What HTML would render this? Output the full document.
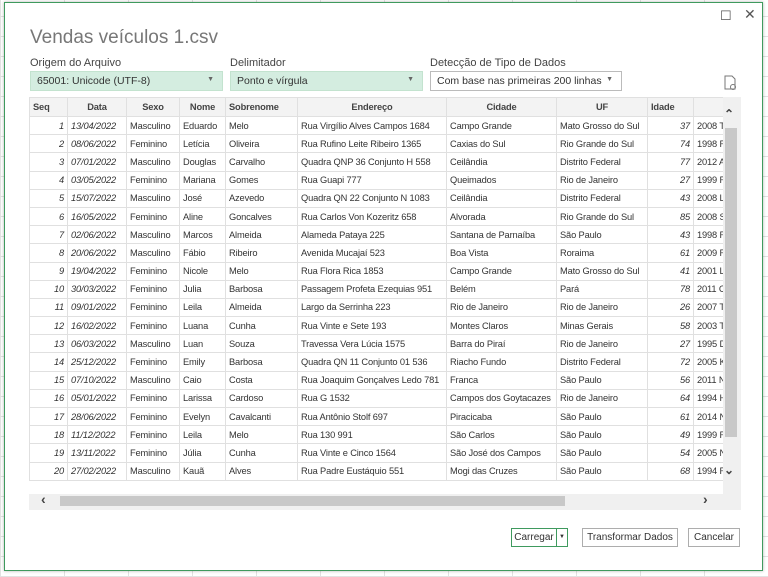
<!DOCTYPE html>
<html><head><meta charset="utf-8"><style>
*{box-sizing:border-box;margin:0;padding:0}
body{width:768px;height:577px;position:relative;overflow:hidden;background:#fff;font-family:"Liberation Sans",sans-serif;color:#333}
.bg{position:absolute;inset:0;background:repeating-linear-gradient(90deg,#e2e2e2 0 1px,transparent 1px 64px),repeating-linear-gradient(0deg,#e2e2e2 0 1px,transparent 1px 20px);background-color:#fff}
.dlg{position:absolute;left:4px;top:2px;width:759px;height:569px;background:#fff;border:1px solid #3f9a5e;box-shadow:0 0 3px rgba(0,0,0,.3)}
.abs{position:absolute}
.title{left:30px;top:27px;font-size:19px;color:#777;font-weight:normal}
.lbl{font-size:11px;color:#444}
.dd{height:20px;font-size:10.5px;padding:3px 6px;color:#333}
.green{background:#d4ede0;border:1px solid #c3e3cf}
.arr{position:absolute;right:8px;top:4px;font-size:7px;color:#666}
table{border-collapse:collapse;table-layout:fixed;font-size:9.3px;letter-spacing:-0.15px}
td,th{border:1px solid #e0e0e0;height:18.2px;padding:0 3px;white-space:nowrap;overflow:hidden}
th{background:#f3f3f3;font-weight:bold;color:#444;height:19px}
td.n{text-align:right;font-style:italic}
td.d{font-style:italic}
.btn{position:absolute;top:528px;height:19px;border:1px solid #adadad;font-size:10px;text-align:center;line-height:17px;background:#fff}
</style></head><body>
<div class="bg"></div>
<div class="dlg"></div>
<div class="abs" style="left:720px;top:8px;font-size:13px;color:#555">☐</div>
<div class="abs" style="left:744px;top:6px;font-size:14px;color:#555">✕</div>
<div class="abs title">Vendas veículos 1.csv</div>
<div class="abs lbl" style="left:30px;top:57px">Origem do Arquivo</div>
<div class="abs lbl" style="left:230px;top:57px">Delimitador</div>
<div class="abs lbl" style="left:430px;top:57px">Detecção de Tipo de Dados</div>
<div class="abs dd green" style="left:30px;top:71px;width:193px">65001: Unicode (UTF-8)<span class="arr">▼</span></div>
<div class="abs dd green" style="left:230px;top:71px;width:193px">Ponto e vírgula<span class="arr">▼</span></div>
<div class="abs dd" style="left:430px;top:71px;width:192px;border:1px solid #bbb">Com base nas primeiras 200 linhas<span class="arr">▼</span></div>
<svg class="abs" style="left:724px;top:75px" width="13" height="16" viewBox="0 0 13 16"><path d="M1 1h7l3 3v10H1z" fill="none" stroke="#777"/><circle cx="9" cy="12" r="2.5" fill="none" stroke="#777"/></svg>
<div class="abs" style="left:29px;top:97px;width:712px;height:413px;background:#f0f0f0;overflow:hidden">
<div class="abs" style="left:0;top:0;width:694px;height:397px;background:#fff;overflow:hidden">
<table style="width:740px">
<colgroup><col style="width:38px"><col style="width:59px"><col style="width:53px"><col style="width:46px"><col style="width:72px"><col style="width:149px"><col style="width:110px"><col style="width:91px"><col style="width:46px"><col style="width:76px"></colgroup>
<tr><th style="text-align:left">Seq</th><th>Data</th><th>Sexo</th><th>Nome</th><th style="text-align:left">Sobrenome</th><th>Endereço</th><th>Cidade</th><th>UF</th><th style="text-align:left">Idade</th><th>V</th></tr>
<tr><td class="n">1</td><td class="d">13/04/2022</td><td>Masculino</td><td>Eduardo</td><td>Melo</td><td>Rua Virgílio Alves Campos 1684</td><td>Campo Grande</td><td>Mato Grosso do Sul</td><td class="n">37</td><td>2008 T</td></tr>
<tr><td class="n">2</td><td class="d">08/06/2022</td><td>Feminino</td><td>Letícia</td><td>Oliveira</td><td>Rua Rufino Leite Ribeiro 1365</td><td>Caxias do Sul</td><td>Rio Grande do Sul</td><td class="n">74</td><td>1998 F</td></tr>
<tr><td class="n">3</td><td class="d">07/01/2022</td><td>Masculino</td><td>Douglas</td><td>Carvalho</td><td>Quadra QNP 36 Conjunto H 558</td><td>Ceilândia</td><td>Distrito Federal</td><td class="n">77</td><td>2012 A</td></tr>
<tr><td class="n">4</td><td class="d">03/05/2022</td><td>Feminino</td><td>Mariana</td><td>Gomes</td><td>Rua Guapi 777</td><td>Queimados</td><td>Rio de Janeiro</td><td class="n">27</td><td>1999 F</td></tr>
<tr><td class="n">5</td><td class="d">15/07/2022</td><td>Masculino</td><td>José</td><td>Azevedo</td><td>Quadra QN 22 Conjunto N 1083</td><td>Ceilândia</td><td>Distrito Federal</td><td class="n">43</td><td>2008 L</td></tr>
<tr><td class="n">6</td><td class="d">16/05/2022</td><td>Feminino</td><td>Aline</td><td>Goncalves</td><td>Rua Carlos Von Kozeritz 658</td><td>Alvorada</td><td>Rio Grande do Sul</td><td class="n">85</td><td>2008 S</td></tr>
<tr><td class="n">7</td><td class="d">02/06/2022</td><td>Masculino</td><td>Marcos</td><td>Almeida</td><td>Alameda Pataya 225</td><td>Santana de Parnaíba</td><td>São Paulo</td><td class="n">43</td><td>1998 F</td></tr>
<tr><td class="n">8</td><td class="d">20/06/2022</td><td>Masculino</td><td>Fábio</td><td>Ribeiro</td><td>Avenida Mucajaí 523</td><td>Boa Vista</td><td>Roraima</td><td class="n">61</td><td>2009 F</td></tr>
<tr><td class="n">9</td><td class="d">19/04/2022</td><td>Feminino</td><td>Nicole</td><td>Melo</td><td>Rua Flora Rica 1853</td><td>Campo Grande</td><td>Mato Grosso do Sul</td><td class="n">41</td><td>2001 L</td></tr>
<tr><td class="n">10</td><td class="d">30/03/2022</td><td>Feminino</td><td>Julia</td><td>Barbosa</td><td>Passagem Profeta Ezequias 951</td><td>Belém</td><td>Pará</td><td class="n">78</td><td>2011 C</td></tr>
<tr><td class="n">11</td><td class="d">09/01/2022</td><td>Feminino</td><td>Leila</td><td>Almeida</td><td>Largo da Serrinha 223</td><td>Rio de Janeiro</td><td>Rio de Janeiro</td><td class="n">26</td><td>2007 T</td></tr>
<tr><td class="n">12</td><td class="d">16/02/2022</td><td>Feminino</td><td>Luana</td><td>Cunha</td><td>Rua Vinte e Sete 193</td><td>Montes Claros</td><td>Minas Gerais</td><td class="n">58</td><td>2003 T</td></tr>
<tr><td class="n">13</td><td class="d">06/03/2022</td><td>Masculino</td><td>Luan</td><td>Souza</td><td>Travessa Vera Lúcia 1575</td><td>Barra do Piraí</td><td>Rio de Janeiro</td><td class="n">27</td><td>1995 D</td></tr>
<tr><td class="n">14</td><td class="d">25/12/2022</td><td>Feminino</td><td>Emily</td><td>Barbosa</td><td>Quadra QN 11 Conjunto 01 536</td><td>Riacho Fundo</td><td>Distrito Federal</td><td class="n">72</td><td>2005 K</td></tr>
<tr><td class="n">15</td><td class="d">07/10/2022</td><td>Masculino</td><td>Caio</td><td>Costa</td><td>Rua Joaquim Gonçalves Ledo 781</td><td>Franca</td><td>São Paulo</td><td class="n">56</td><td>2011 N</td></tr>
<tr><td class="n">16</td><td class="d">05/01/2022</td><td>Feminino</td><td>Larissa</td><td>Cardoso</td><td>Rua G 1532</td><td>Campos dos Goytacazes</td><td>Rio de Janeiro</td><td class="n">64</td><td>1994 H</td></tr>
<tr><td class="n">17</td><td class="d">28/06/2022</td><td>Feminino</td><td>Evelyn</td><td>Cavalcanti</td><td>Rua Antônio Stolf 697</td><td>Piracicaba</td><td>São Paulo</td><td class="n">61</td><td>2014 N</td></tr>
<tr><td class="n">18</td><td class="d">11/12/2022</td><td>Feminino</td><td>Leila</td><td>Melo</td><td>Rua 130 991</td><td>São Carlos</td><td>São Paulo</td><td class="n">49</td><td>1999 F</td></tr>
<tr><td class="n">19</td><td class="d">13/11/2022</td><td>Feminino</td><td>Júlia</td><td>Cunha</td><td>Rua Vinte e Cinco 1564</td><td>São José dos Campos</td><td>São Paulo</td><td class="n">54</td><td>2005 N</td></tr>
<tr><td class="n">20</td><td class="d">27/02/2022</td><td>Masculino</td><td>Kauã</td><td>Alves</td><td>Rua Padre Eustáquio 551</td><td>Mogi das Cruzes</td><td>São Paulo</td><td class="n">68</td><td>1994 F</td></tr>
</table></div>
<div class="abs" style="left:696px;top:31px;width:12px;height:309px;background:#c8c8c8"></div>
<div class="abs" style="left:695px;top:10px;font-size:12px;color:#444;font-weight:bold">⌃</div>
<div class="abs" style="left:695px;top:366px;font-size:12px;color:#444;font-weight:bold">⌄</div>
<div class="abs" style="left:31px;top:399px;width:505px;height:10px;background:#c8c8c8"></div>
<div class="abs" style="left:12px;top:394px;font-size:14px;color:#444;font-weight:bold">‹</div>
<div class="abs" style="left:674px;top:394px;font-size:14px;color:#444;font-weight:bold">›</div>
</div>
<div class="btn" style="left:511px;width:57px;border-color:#3f9a5e;display:flex;padding:0"><span style="flex:1;text-align:center">Carregar</span><span style="width:11px;border-left:1px solid #3f9a5e;font-size:6px;text-align:center">▼</span></div>
<div class="btn" style="left:582px;width:96px">Transformar Dados</div>
<div class="btn" style="left:688px;width:52px">Cancelar</div>
</body></html>
